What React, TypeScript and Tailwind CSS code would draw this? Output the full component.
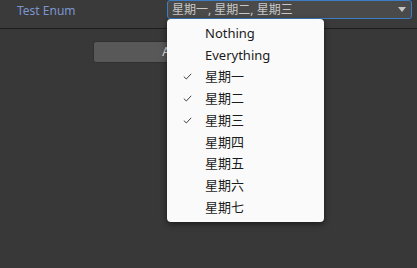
import React from "react";

const days = ["星期一", "星期二", "星期三", "星期四", "星期五", "星期六", "星期七"];
const selected = ["星期一", "星期二", "星期三"];

const font = {
  fontFamily: '"Noto Sans", "Noto Sans CJK SC", sans-serif',
};

const Check = () => (
  <svg width="9" height="7" viewBox="0 0 9 7" className="block">
    <path d="M0.8 3.6 L3.3 6 L8.2 0.8" fill="none" stroke="#444" strokeWidth="1" />
  </svg>
);

const MenuItem = ({ label, checked }: { label: string; checked?: boolean }) => {
  return (
    <div className="h-[21.75px] flex items-center">
      <div className="w-[38px] flex justify-center pl-[2px]">{checked && <Check />}</div>
      <span className="text-[13px] text-[#1b1b1b] leading-none">{label}</span>
    </div>
  );
};

const App = () => {
  return (
    <div className="relative w-[417px] h-[268px] bg-[#383838] overflow-hidden" style={font}>
      {/* Inspector row */}
      <div className="h-[28px] flex items-start bg-[#3a3a3a]">
        <span className="pl-[17px] pt-[1px] text-[12px] leading-[19px] text-[#7d95cf]">Test Enum</span>
        <div className="ml-auto mr-[5px] w-[245px] h-[19px] rounded-[3px] border border-[#3d7dc4] bg-[#4a4a4a] flex items-center px-[4px]">
          <span className="text-[12px] leading-none text-[#c8c8c8] flex-1">星期一, 星期二, 星期三</span>
          <svg width="8" height="5" viewBox="0 0 8 5" className="mr-[1px]">
            <path d="M0 0 L8 0 L4 5 Z" fill="#c4c4c4" />
          </svg>
        </div>
      </div>
      <div className="h-px bg-[#1e1e1e]" />

      {/* Button row */}
      <div className="pt-[9px] pl-[93px]">
        <button className="w-[170px] h-[22px] rounded-[3px] bg-[#585858] border border-[#303030] text-[12px] text-[#e4e4e4]">
          Apply
        </button>
      </div>

      {/* Dropdown menu */}
      <div className="absolute left-[167px] top-[19px] w-[157px] h-[203px] bg-[#fafafa] rounded-[4px] shadow-[0_2px_6px_rgba(0,0,0,0.55)] pt-[3.5px]">
        <MenuItem label="Nothing" />
        <MenuItem label="Everything" />
        {days.map((d) => (
          <MenuItem key={d} label={d} checked={selected.includes(d)} />
        ))}
      </div>
    </div>
  );
};

export default App;
